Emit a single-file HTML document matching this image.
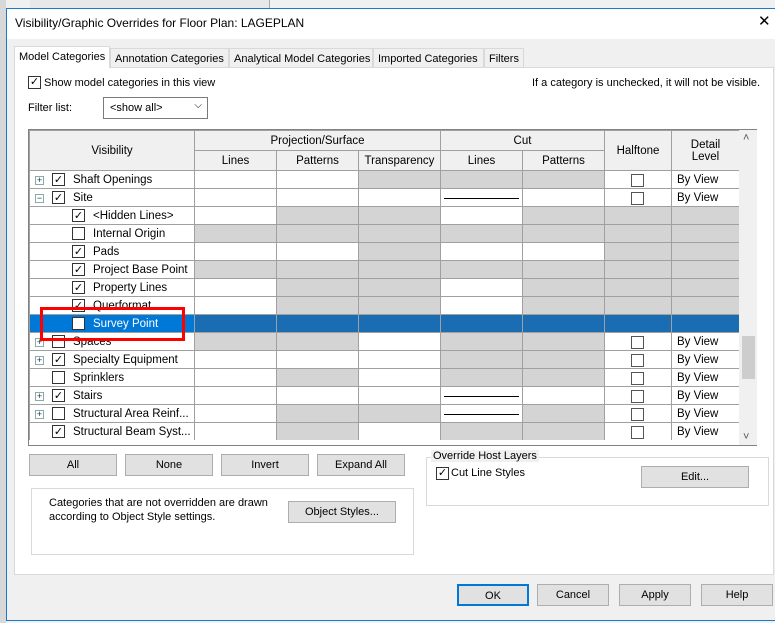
<!DOCTYPE html>
<html><head><style>
*{box-sizing:border-box;margin:0;padding:0}
body{width:775px;height:623px;overflow:hidden;background:#f0f0f0;font-family:"Liberation Sans",sans-serif;font-size:11px;color:#000;position:relative}
.abs{position:absolute;white-space:nowrap}
.dlg{left:6px;top:8px;width:775px;height:613px;border:1px solid #1979ca;background:#f0f0f0}
.title{left:7px;top:9px;width:770px;height:30px;background:#fff}
.panel{left:14px;top:67px;width:760px;height:508px;background:#fff;border:1px solid #d9d9d9}
.tab{top:48px;height:20px;border:1px solid #d9d9d9;background:#f0f0f0;padding:4px 4px;font-size:11px;white-space:nowrap;overflow:hidden}
.cb{width:13px;height:13px;border:1px solid #333;background:#fff;position:absolute;font-size:11px;line-height:11px;text-align:center}
.btn{position:absolute;height:22px;background:#e1e1e1;border:1px solid #adadad;text-align:center;line-height:20px;font-size:11px}
table{border-collapse:collapse;table-layout:fixed;position:absolute;left:29px;top:130px}
td{border:1px solid #a0a0a0;height:18px;padding:0;position:relative;white-space:nowrap;overflow:hidden;font-size:11.5px}
th{border:1px solid #a0a0a0;background:#f0f0f0;font-weight:normal;font-size:11.5px;height:20px;padding:0}
.h{background:repeating-conic-gradient(#a8a8a8 0 25%,#fff 0 50%) 0 0/2px 2px}
.sel td{background:#0078d7;color:#fff}
.sel td.hs{background:repeating-conic-gradient(#33628f 0 25%,#0078d7 0 50%) 0 0/2px 2px}
.ln::after{content:"";position:absolute;left:3px;right:3px;top:9px;border-top:1px solid #000}
.hc::after{content:"";position:absolute;left:26px;top:3px;width:11px;height:11px;border:1px solid #555;background:#fff}
.bv{padding-left:5px}
.n{padding-left:43px}
.c{padding-left:63px}
.ex{position:absolute;left:5px;top:5px;width:9px;height:9px;border:1px solid #8aa;background:#fff;font-size:9px;line-height:7px;text-align:center;color:#234}
.k{position:absolute;top:2px;width:13px;height:13px;border:1px solid #333;background:#fff;font-size:11px;line-height:12px;text-align:center;color:#000}
</style></head><body>
<div class="abs" style="left:0;top:0;width:6px;height:623px;background:#d8d8d8"></div>
<div class="abs" style="left:30px;top:0;width:240px;height:8px;background:#e8e8e8;border-right:1px solid #aaa"></div>
<div class="abs dlg"></div>
<div class="abs title"></div>
<div class="abs" style="left:15px;top:16px;font-size:12px">Visibility/Graphic Overrides for Floor Plan: LAGEPLAN</div>
<div class="abs" style="left:758px;top:12px;font-size:15px;font-weight:lighter">✕</div>
<div class="abs panel"></div>
<div class="abs tab" style="left:14px;top:46px;height:22px;background:#fff;border-bottom:none;width:96px">Model Categories</div>
<div class="abs tab" style="left:110px;width:119px">Annotation Categories</div>
<div class="abs tab" style="left:229px;width:144px">Analytical Model Categories</div>
<div class="abs tab" style="left:373px;width:111px">Imported Categories</div>
<div class="abs tab" style="left:484px;width:40px">Filters</div>
<div class="cb" style="left:28px;top:76px">✓</div>
<div class="abs" style="left:44px;top:77px">Show model categories in this view</div>
<div class="abs" style="left:532px;top:77px">If a category is unchecked, it will not be visible.</div>
<div class="abs" style="left:28px;top:102px">Filter list:</div>
<div class="abs" style="left:103px;top:97px;width:105px;height:22px;border:1px solid #7a7a7a;background:#fff;padding:4px 6px">&lt;show all&gt;<span style="position:absolute;right:5px;top:2px;font-size:10px">⌵</span></div>
<div class="abs" style="left:28px;top:129px;width:729px;height:317px;border:1px solid #828282;background:#fff"></div>
<table>
<colgroup><col style="width:165px"><col style="width:82px"><col style="width:82px"><col style="width:82px"><col style="width:82px"><col style="width:82px"><col style="width:67px"><col style="width:68px"></colgroup>
<tr><th rowspan="2">Visibility</th><th colspan="3" style="height:20px">Projection/Surface</th><th colspan="2">Cut</th><th rowspan="2">Halftone</th><th rowspan="2">Detail<br>Level</th></tr>
<tr><th style="height:18px">Lines</th><th>Patterns</th><th>Transparency</th><th>Lines</th><th>Patterns</th></tr>
<tr><td class="n"><span class="ex">+</span><span class="k" style="left:22px">✓</span>Shaft Openings</td><td></td><td></td><td class="h"></td><td class="h"></td><td class="h"></td><td class="hc"></td><td class="bv">By View</td></tr>
<tr><td class="n"><span class="ex">−</span><span class="k" style="left:22px">✓</span>Site</td><td></td><td></td><td></td><td class="ln"></td><td></td><td class="hc"></td><td class="bv">By View</td></tr>
<tr><td class="c"><span class="k" style="left:42px">✓</span>&lt;Hidden Lines&gt;</td><td></td><td class="h"></td><td class="h"></td><td></td><td class="h"></td><td class="h"></td><td class="h"></td></tr>
<tr><td class="c"><span class="k" style="left:42px"></span>Internal Origin</td><td class="h"></td><td class="h"></td><td class="h"></td><td class="h"></td><td class="h"></td><td class="h"></td><td class="h"></td></tr>
<tr><td class="c"><span class="k" style="left:42px">✓</span>Pads</td><td></td><td></td><td class="h"></td><td></td><td></td><td class="h"></td><td class="h"></td></tr>
<tr><td class="c"><span class="k" style="left:42px">✓</span>Project Base Point</td><td class="h"></td><td class="h"></td><td class="h"></td><td class="h"></td><td class="h"></td><td class="h"></td><td class="h"></td></tr>
<tr><td class="c"><span class="k" style="left:42px">✓</span>Property Lines</td><td></td><td class="h"></td><td class="h"></td><td></td><td class="h"></td><td class="h"></td><td class="h"></td></tr>
<tr><td class="c"><span class="k" style="left:42px">✓</span>Querformat</td><td></td><td class="h"></td><td class="h"></td><td></td><td class="h"></td><td class="h"></td><td class="h"></td></tr>
<tr class="sel"><td class="c"><span class="k" style="left:42px"></span>Survey Point</td><td class="hs"></td><td class="hs"></td><td class="hs"></td><td class="hs"></td><td class="hs"></td><td class="hs"></td><td class="hs"></td></tr>
<tr><td class="n"><span class="ex">+</span><span class="k" style="left:22px"></span>Spaces</td><td class="h"></td><td class="h"></td><td></td><td class="h"></td><td class="h"></td><td class="hc"></td><td class="bv">By View</td></tr>
<tr><td class="n"><span class="ex">+</span><span class="k" style="left:22px">✓</span>Specialty Equipment</td><td></td><td></td><td></td><td class="h"></td><td class="h"></td><td class="hc"></td><td class="bv">By View</td></tr>
<tr><td class="n"><span class="k" style="left:22px"></span>Sprinklers</td><td></td><td class="h"></td><td></td><td class="h"></td><td class="h"></td><td class="hc"></td><td class="bv">By View</td></tr>
<tr><td class="n"><span class="ex">+</span><span class="k" style="left:22px">✓</span>Stairs</td><td></td><td></td><td></td><td class="ln"></td><td></td><td class="hc"></td><td class="bv">By View</td></tr>
<tr><td class="n"><span class="ex">+</span><span class="k" style="left:22px"></span>Structural Area Reinf...</td><td></td><td class="h"></td><td class="h"></td><td class="ln"></td><td class="h"></td><td class="hc"></td><td class="bv">By View</td></tr>
<tr><td class="n"><span class="k" style="left:22px">✓</span>Structural Beam Syst...</td><td></td><td class="h"></td><td></td><td class="h"></td><td class="h"></td><td class="hc"></td><td class="bv">By View</td></tr>
</table>
<div class="abs" style="left:29px;top:440px;width:728px;height:6px;background:#fff;border-bottom:1px solid #828282"></div>
<div class="abs" style="left:739px;top:130px;width:18px;height:315px;background:#f0f0f0"></div>
<div class="abs" style="left:743px;top:132px;font-size:11px;color:#555">˄</div>
<div class="abs" style="left:743px;top:431px;font-size:11px;color:#555">˅</div>
<div class="abs" style="left:742px;top:336px;width:13px;height:43px;background:#cdcdcd"></div>
<div class="abs" style="left:40px;top:307px;width:145px;height:34px;border:3px solid #f00"></div>
<div class="btn" style="left:29px;top:454px;width:88px">All</div>
<div class="btn" style="left:125px;top:454px;width:88px">None</div>
<div class="btn" style="left:221px;top:454px;width:88px">Invert</div>
<div class="btn" style="left:317px;top:454px;width:88px">Expand All</div>
<div class="abs" style="left:31px;top:488px;width:383px;height:67px;border:1px solid #d9d9d9"></div>
<div class="abs" style="left:49px;top:496px;line-height:14px">Categories that are not overridden are drawn<br>according to Object Style settings.</div>
<div class="btn" style="left:288px;top:501px;width:108px">Object Styles...</div>
<div class="abs" style="left:426px;top:457px;width:343px;height:49px;border:1px solid #d9d9d9"></div>
<div class="abs" style="left:431px;top:450px;background:#f0f0f0;padding:0 2px">Override Host Layers</div>
<div class="cb" style="left:436px;top:467px">✓</div>
<div class="abs" style="left:451px;top:467px">Cut Line Styles</div>
<div class="btn" style="left:641px;top:466px;width:108px">Edit...</div>
<div class="btn" style="left:457px;top:584px;width:72px;border:2px solid #0078d7">OK</div>
<div class="btn" style="left:537px;top:584px;width:72px">Cancel</div>
<div class="btn" style="left:619px;top:584px;width:72px">Apply</div>
<div class="btn" style="left:701px;top:584px;width:72px">Help</div>
</body></html>
